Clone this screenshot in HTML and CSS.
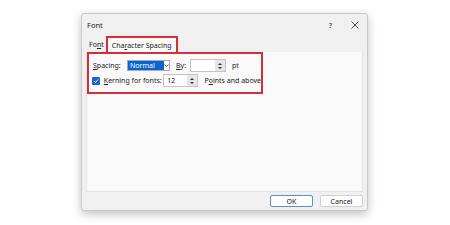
FILE: index.html
```
<!DOCTYPE html>
<html lang="en">

<head>
    <meta charset="UTF-8">
    <title>Font</title>
    <link rel="stylesheet" href="styles.css">
</head>

<body>
    <div class="dialog">
        <div class="titlebar">
            <span class="title">Font</span>
            <span class="help">?</span>
            <span class="close">
                <svg width="8" height="8" viewBox="0 0 8 8"><path d="M0.5 0.5 L7.5 7.5 M7.5 0.5 L0.5 7.5" stroke="#333" stroke-width="0.9" /></svg>
            </span>
        </div>
        <div class="tabs">
            <div class="tab">Fo<u>n</u>t</div>
            <div class="tab active">Cha<u>r</u>acter Spacing</div>
        </div>
        <div class="panel">
            <div class="group">
                <div class="row">
                    <span class="label spacing"><u>S</u>pacing:</span>
                    <div class="select">
                        <span class="value">Normal</span>
                        <span class="arrow">
                            <svg width="5" height="3" viewBox="0 0 5 3"><path d="M0.5 0.5 L2.5 2.5 L4.5 0.5" stroke="#444" stroke-width="0.8" fill="none" /></svg>
                        </span>
                    </div>
                    <span class="label by"><u>B</u>y:</span>
                    <div class="spin wide">
                        <span class="field"></span>
                        <span class="buttons-spin"><span class="up"></span><span class="down"></span></span>
                    </div>
                    <span class="label unit">pt</span>
                </div>
                <div class="row">
                    <span class="check">
                        <svg width="6" height="6" viewBox="0 0 6 6"><path d="M1 3 L2.5 4.5 L5 1.5" stroke="#fff" stroke-width="0.9" fill="none" /></svg>
                    </span>
                    <span class="label kerning"><u>K</u>erning for fonts:</span>
                    <div class="spin">
                        <span class="field">12</span>
                        <span class="buttons-spin"><span class="up"></span><span class="down"></span></span>
                    </div>
                    <span class="label unit">P<u>o</u>ints and above</span>
                </div>
            </div>
        </div>
        <div class="footer">
            <button class="btn primary">OK</button>
            <button class="btn">Cancel</button>
        </div>
    </div>
</body>

</html>
```

FILE: styles.css
```
body {
    margin: 0;
    padding: 0;
    width: 450px;
    height: 225px;
    background: #fff;
    font-family: "Noto Sans", sans-serif;
    font-size: 7px;
    color: #222;
    overflow: hidden;
}

.dialog {
    margin: 13px 0 0 81px;
    width: 287px;
    height: 198px;
    box-sizing: border-box;
    background: #f0f0f0;
    border: 1px solid #c8c8c8;
    border-radius: 3px;
    box-shadow: 0 3px 10px rgba(0, 0, 0, 0.25);
    display: flex;
    flex-direction: column;
}

.titlebar {
    height: 21px;
    display: flex;
    align-items: center;
    padding: 0 8px 0 5px;
    font-size: 7.5px;
}

.title {
    flex: 1;
}

.help {
    margin-right: 19px;
}

.close {
    display: flex;
}

.tabs {
    display: flex;
    margin: 1px 0 0 4px;
    height: 16px;
    align-items: flex-end;
    white-space: nowrap;
}

.tab {
    padding: 0 2px 3px 3px;
}

.tab.active {
    height: 16px;
    box-sizing: border-box;
    padding: 3px 4px 0 4px;
    background: #f9f9f9;
    border: 2px solid #d32f3b;
    border-bottom: none;
}

.panel {
    margin: 0 4px;
    height: 139px;
    background: #f9f9f9;
    border: 1px solid #e2e2e2;
    border-top: none;
}

.group {
    width: 176px;
    height: 42px;
    box-sizing: border-box;
    border: 2px solid #d32f3b;
    padding: 5px 0 0 4px;
    display: flex;
    flex-direction: column;
    gap: 2px;
}

.row {
    display: flex;
    align-items: center;
    height: 13px;
    white-space: nowrap;
}

.label.spacing {
    width: 34px;
}

.label.by {
    margin: 0 0 0 6px;
    width: 14px;
}

.label.unit {
    margin-left: 6px;
}

.select {
    width: 43px;
    height: 11px;
    box-sizing: border-box;
    border: 1px solid #aaa;
    background: #fff;
    display: flex;
}

.select .value {
    width: 36px;
    background: #0a64d0;
    color: #fff;
    padding-left: 2px;
    line-height: 9px;
}

.select .arrow {
    flex: 1;
    display: flex;
    align-items: center;
    justify-content: center;
}

.spin {
    display: flex;
    height: 13px;
    width: 36px;
    box-sizing: border-box;
    border: 1px solid #c4c4c4;
    background: #fff;
}

.spin.wide {
    width: 36px;
}

.spin .field {
    flex: 1;
    padding-left: 3px;
    line-height: 11px;
}

.buttons-spin {
    width: 10px;
    background: #e6e6e6;
    display: flex;
    flex-direction: column;
    align-items: center;
    justify-content: center;
    gap: 2px;
}

.up,
.down {
    width: 0;
    height: 0;
    border-left: 2px solid transparent;
    border-right: 2px solid transparent;
}

.up {
    border-bottom: 2px solid #333;
}

.down {
    border-top: 2px solid #333;
}

.check {
    width: 8px;
    height: 8px;
    margin-left: -1px;
    border-radius: 1px;
    background: #1b64c8;
    display: flex;
    align-items: center;
    justify-content: center;
}

.label.kerning {
    margin-left: 4px;
    width: 61px;
}

.footer {
    display: flex;
    justify-content: flex-end;
    gap: 7px;
    padding: 3px 4px 0 0;
}

.btn {
    width: 43px;
    height: 12px;
    padding: 0;
    font-family: "Noto Sans", sans-serif;
    font-size: 7px;
    color: #222;
    background: #fdfdfd;
    border: 1px solid #d0d0d0;
    border-radius: 2px;
}

.btn.primary {
    border-color: #5b8fc7;
}
```
